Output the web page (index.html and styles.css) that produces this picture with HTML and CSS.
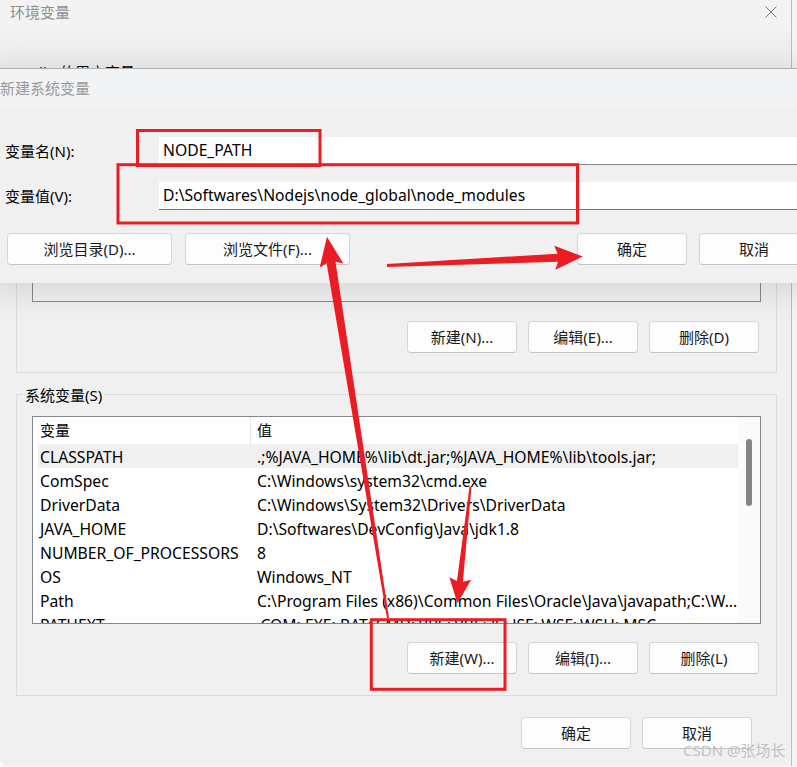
FILE: index.html
```html
<!DOCTYPE html>
<html lang="zh-CN">
<head>
<meta charset="utf-8">
<title>环境变量</title>
<link rel="stylesheet" href="styles.css">
</head>
<body>
<div class="screen">
  <div class="envwin">
    <div class="titlebar">
      <span class="title">环境变量</span>
      <svg class="close" viewBox="0 0 12 12"><path d="M0.5 0.5 L11.5 11.5 M11.5 0.5 L0.5 11.5" stroke="#777" stroke-width="1" fill="none"/></svg>
    </div>
    <div class="envbody">
      <div class="group usergroup">
        <span class="legend">mijn 的用户变量(U)</span>
        <div class="list userlist"></div>
        <div class="btnrow">
          <button class="btn">新建(N)...</button>
          <button class="btn">编辑(E)...</button>
          <button class="btn">删除(D)</button>
        </div>
      </div>
      <div class="group sysgroup">
        <span class="legend">系统变量(S)</span>
        <div class="list syslist">
          <div class="rows">
            <div class="row head"><span class="k">变量</span><span class="v">值</span></div>
            <div class="row sel"><span class="k">CLASSPATH</span><span class="v">.;%JAVA_HOME%\lib\dt.jar;%JAVA_HOME%\lib\tools.jar;</span></div>
            <div class="row"><span class="k">ComSpec</span><span class="v">C:\Windows\system32\cmd.exe</span></div>
            <div class="row"><span class="k">DriverData</span><span class="v">C:\Windows\System32\Drivers\DriverData</span></div>
            <div class="row"><span class="k">JAVA_HOME</span><span class="v">D:\Softwares\DevConfig\Java\jdk1.8</span></div>
            <div class="row"><span class="k">NUMBER_OF_PROCESSORS</span><span class="v">8</span></div>
            <div class="row"><span class="k">OS</span><span class="v">Windows_NT</span></div>
            <div class="row"><span class="k">Path</span><span class="v">C:\Program Files (x86)\Common Files\Oracle\Java\javapath;C:\W...</span></div>
            <div class="row"><span class="k">PATHEXT</span><span class="v">.COM;.EXE;.BAT;.CMD;.VBS;.VBE;.JS;.JSE;.WSF;.WSH;.MSC</span></div>
          </div>
          <div class="scrollbar"><div class="thumb"></div></div>
        </div>
        <div class="btnrow sysbtns">
          <button class="btn">新建(W)...</button>
          <button class="btn">编辑(I)...</button>
          <button class="btn">删除(L)</button>
        </div>
      </div>
      <div class="btnrow footer">
        <button class="btn">确定</button>
        <button class="btn">取消</button>
      </div>
    </div>
  </div>
  <div class="sidestrip"></div>

  <div class="dialog">
    <div class="dtitle">新建系统变量</div>
    <div class="dbody">
      <div class="form">
        <label class="lbl">变量名(N):</label>
        <div class="field">NODE_PATH</div>
        <label class="lbl">变量值(V):</label>
        <div class="field focus">D:\Softwares\Nodejs\node_global\node_modules</div>
      </div>
      <div class="dbtns">
        <button class="btn wide">浏览目录(D)...</button>
        <button class="btn wide">浏览文件(F)...</button>
        <button class="btn push">确定</button>
        <button class="btn">取消</button>
      </div>
    </div>
  </div>

  <svg class="annot" viewBox="0 0 797 767" width="797" height="767">
    <g fill="none" stroke="#ec1c24" stroke-width="3">
      <rect x="137.5" y="130.5" width="182.5" height="35"/>
      <rect x="118" y="164.7" width="459.5" height="58.3"/>
      <rect x="371.3" y="619.7" width="133.7" height="69.6"/>
    </g>
    <g fill="#ec1c24">
      <g transform="translate(387 265.5) rotate(-2.63)">
        <polygon points="0,-1.5 171,-4 168,-12 196,0 168,12 171,4 0,1.5"/>
      </g>
      <g transform="translate(388 618) rotate(-99.1)">
        <polygon points="0,-1 360,-4.5 357,-12 386,0 357,12 360,4.5 0,1"/>
      </g>
      <g transform="translate(470.5 487) rotate(96.4)">
        <polygon points="0,-1 95,-3 92,-11 117,0 92,11 95,3 0,1"/>
      </g>
    </g>
  </svg>

  <div class="watermark">CSDN @张场长</div>
</div>
</body>
</html>
```

FILE: styles.css
```css
* {
  box-sizing: border-box;
  margin: 0;
  padding: 0;
}

html,
body {
  width: 797px;
  height: 767px;
  overflow: hidden;
}

body {
  font-family: "Noto Sans", "Noto Sans CJK SC", sans-serif;
  font-size: 15px;
  color: #000;
  background: #fafafa;
}

.screen {
  position: relative;
  display: flex;
  width: 797px;
  height: 767px;
  overflow: hidden;
}

/* background window */
.envwin {
  width: 792px;
  height: 766px;
  flex: none;
  background: #f0f0f0;
  border-right: 1px solid #bdbdbd;
  border-bottom-left-radius: 8px;
  display: flex;
  flex-direction: column;
}

.titlebar {
  height: 31px;
  flex: none;
  background: #f3f3f3;
  display: flex;
  align-items: flex-start;
  justify-content: space-between;
  padding: 2px 14px 0 10px;
}

.title {
  color: #8f8f8f;
  line-height: 20px;
}

.close {
  width: 12px;
  height: 12px;
  margin-top: 4px;
}

.envbody {
  padding: 40px 14px 0 16px;
}

.group {
  border: 1px solid #dcdcdc;
  padding: 0 15px 19px;
}

.sysgroup {
  margin-top: 21px;
  padding-bottom: 21px;
}

.legend {
  display: block;
  width: fit-content;
  margin: -10px 0 0 -9px;
  padding: 0 2px;
  line-height: 20px;
  background: #f0f0f0;
  white-space: nowrap;
}

.list {
  border: 1px solid #828790;
  margin-top: 11px;
}

.userlist {
  height: 209px;
  background: #f2f2f2;
}

.syslist {
  height: 208px;
  display: flex;
  background: #fff;
  overflow: hidden;
}

.rows {
  flex: 1;
  min-width: 0;
  padding-left: 5px;
}

.row {
  display: grid;
  grid-template-columns: 213px 1fr;
  height: 24px;
  line-height: 26px;
  white-space: nowrap;
  font-size: 15.7px;
}

.row > span {
  overflow: hidden;
}

.row .k {
  padding-left: 2px;
}

.row .v {
  padding-left: 6px;
}

.row.head {
  height: 27px;
  line-height: 27px;
  font-size: 15px;
}

.row.head .k {
  border-right: 1px solid #e5e5e5;
}

.row.sel {
  background: #f0f0f0;
}

.scrollbar {
  width: 22px;
  flex: none;
  background: #fafafa;
  padding: 22px 0 0 8px;
}

.thumb {
  width: 6px;
  height: 67px;
  background: #858585;
  border-radius: 3px;
}

.btnrow {
  display: flex;
  justify-content: flex-end;
  gap: 11px;
  padding-right: 2px;
  margin-top: 19px;
}

.sysbtns {
  margin-top: 18px;
}

.footer {
  margin-top: 21px;
  margin-right: 25px;
  padding-right: 0;
}

.btn {
  width: 110px;
  height: 32px;
  background: #fdfdfd;
  border: 1px solid #d5d5d5;
  border-bottom-color: #c4c4c4;
  border-radius: 4px;
  font: inherit;
  color: #1a1a1a;
  line-height: 30px;
}

.sidestrip {
  width: 5px;
  flex: none;
  background: #f4f4f4;
}

/* foreground dialog */
.dialog {
  position: absolute;
  left: -12px;
  top: 68px;
  width: 833px;
  background: #f0f0f0;
  border-top: 1px solid #b3b3b3;
  box-shadow: 0 4px 36px rgba(0, 0, 0, 0.14);
}

.dtitle {
  height: 37px;
  background: #f2f3f5;
  padding-left: 12px;
  display: flex;
  align-items: center;
  color: #9a9a9a;
}

.dbody {
  padding: 31px 12px 18px 17px;
}

.form {
  display: grid;
  grid-template-columns: 154px 1fr;
  row-gap: 17px;
  align-items: center;
}

.lbl {
  line-height: 20px;
}

.field {
  height: 28px;
  background: #fff;
  border-bottom: 1px solid #878787;
  padding-left: 4px;
  line-height: 27px;
  white-space: nowrap;
  font-size: 15.7px;
}

.field.focus {
  border-bottom-color: #5d7696;
}

.dbtns {
  display: flex;
  gap: 13px;
  margin-top: 23px;
  margin-left: 2px;
}

.dbtns .wide {
  width: 165px;
}

.dbtns .push {
  margin-left: auto;
  margin-right: -1px;
}

/* annotations */
.annot {
  position: absolute;
  left: 0;
  top: 0;
  pointer-events: none;
}

.watermark {
  position: absolute;
  left: 683px;
  top: 740px;
  line-height: 20px;
  color: #c2c2c2;
  white-space: nowrap;
}
```
